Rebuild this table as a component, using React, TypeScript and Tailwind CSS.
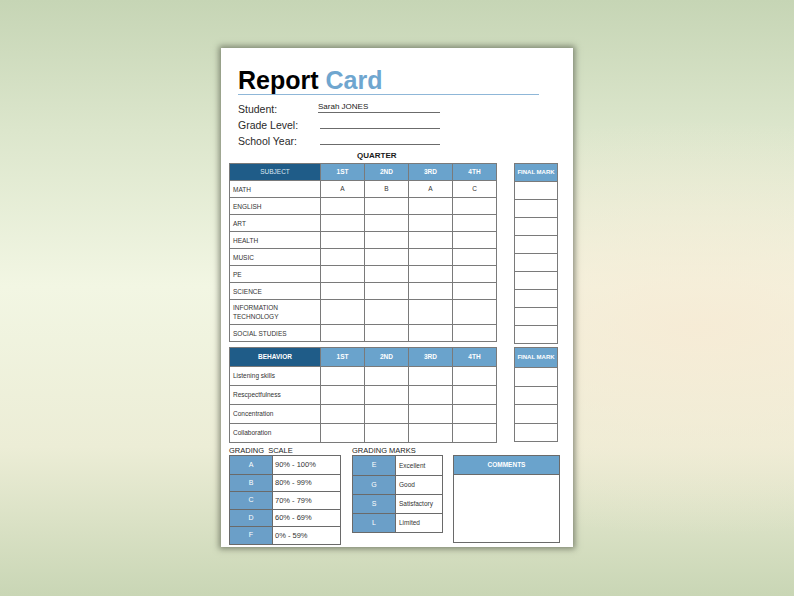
import React from 'react';

const subjects = ['MATH', 'ENGLISH', 'ART', 'HEALTH', 'MUSIC', 'PE', 'SCIENCE', 'INFORMATION TECHNOLOGY', 'SOCIAL STUDIES'];
const math = ['A', 'B', 'A', 'C'];
const behaviors = ['Listening skills', 'Rescpectfulness', 'Concentration', 'Collaboration'];
const scale = [
  ['A', '90% - 100%'],
  ['B', '80% - 99%'],
  ['C', '70% - 79%'],
  ['D', '60% - 69%'],
  ['F', '0% - 59%'],
];
const marks = [
  ['E', 'Excellent'],
  ['G', 'Good'],
  ['S', 'Satisfactory'],
  ['L', 'Limited'],
];
const quarters = ['1ST', '2ND', '3RD', '4TH'];

function InfoRow({ label, value, offset }: { label: string; value?: string; offset?: boolean }) {
  return (
    <div className="flex h-[16px] items-start">
      <div className="w-[80px] text-[10.5px] leading-[16px] text-[#2a2a2a]">{label}</div>
      <div className={`${offset ? 'ml-[2px] w-[120px]' : 'w-[122px]'} h-[12px] border-b border-[#6b6b6b] text-[8px] leading-[12px] text-[#222]`}>
        {value}
      </div>
    </div>
  );
}

function FinalCol({ rows, head, row }: { rows: number; head: string; row: string }) {
  return (
    <div className="ml-[17px] flex w-[44px] flex-col border border-[#7a7a7a]">
      <div className={`${head} flex items-center justify-center bg-[#6aa3cc] text-[6px] font-bold text-white`}>FINAL MARK</div>
      {Array.from({ length: rows }).map((_, i) => (
        <div key={i} className={`${row} border-t border-[#7a7a7a]`} />
      ))}
    </div>
  );
}

export default function App() {
  return (
    <div className="h-[596px] w-[794px] overflow-hidden bg-[radial-gradient(ellipse_at_88%_55%,rgba(247,234,212,0.85),transparent_45%),linear-gradient(180deg,#c6d5b5_0%,#dce6cc_22%,#f2f6e3_48%,#ecedd6_75%,#c9d6b5_100%)] pl-[221px] pt-[48px] font-['Liberation_Sans',Arial,sans-serif]">
      <div className="flex h-[499px] w-[352px] flex-col bg-white pl-[8px] shadow-[0_0_6px_2px_rgba(70,75,60,0.6)]">
        <div className="ml-[9px] mt-[20px]">
          <div className="text-[25px] font-bold leading-[25px] text-black">
            Report <span className="text-[#6fa6cf]">Card</span>
          </div>
          <div className="mt-[1px] h-px w-[301px] bg-[#8fb7d8]" />
          <div className="mt-[6px] flex flex-col">
            <InfoRow label="Student:" value="Sarah JONES" />
            <InfoRow label="Grade Level:" offset />
            <InfoRow label="School Year:" offset />
          </div>
        </div>

        <div className="ml-[128px] h-[14px] text-[8px] font-bold leading-[14px] text-[#1a1a1a]">QUARTER</div>

        <div className="flex items-start">
          <table className="w-[267px] table-fixed border-collapse text-[6.5px] text-[#333]">
            <colgroup>
              <col className="w-[91px]" />
              <col className="w-[44px]" />
              <col className="w-[44px]" />
              <col className="w-[44px]" />
              <col className="w-[44px]" />
            </colgroup>
            <tbody>
              <tr className="h-[17px]">
                <td className="border border-[#7a7a7a] bg-[#1f5c88] text-center text-[6.5px] text-[#dce8f2]">SUBJECT</td>
                {quarters.map((q) => (
                  <td key={q} className="border border-[#7a7a7a] bg-[#6aa3cc] text-center font-bold text-white">{q}</td>
                ))}
              </tr>
              {subjects.map((s, r) => (
                <tr key={s} className={s.startsWith('INFO') ? 'h-[25px]' : 'h-[17px]'}>
                  <td className="border border-[#7a7a7a] pl-[3px] leading-[9px]">
                    {s === 'INFORMATION TECHNOLOGY' ? (
                      <>INFORMATION<br />TECHNOLOGY</>
                    ) : (
                      s
                    )}
                  </td>
                  {quarters.map((q, i) => (
                    <td key={q} className="border border-[#7a7a7a] text-center">{r === 0 ? math[i] : ''}</td>
                  ))}
                </tr>
              ))}
            </tbody>
          </table>
          <FinalCol rows={9} head="h-[17px]" row="h-[18px]" />
        </div>

        <div className="mt-[3px] flex items-start">
          <table className="w-[267px] table-fixed border-collapse text-[6.5px] text-[#333]">
            <colgroup>
              <col className="w-[91px]" />
              <col className="w-[44px]" />
              <col className="w-[44px]" />
              <col className="w-[44px]" />
              <col className="w-[44px]" />
            </colgroup>
            <tbody>
              <tr className="h-[19px]">
                <td className="border border-[#7a7a7a] bg-[#1f5c88] text-center font-bold text-white">BEHAVIOR</td>
                {quarters.map((q) => (
                  <td key={q} className="border border-[#7a7a7a] bg-[#6aa3cc] text-center font-bold text-white">{q}</td>
                ))}
              </tr>
              {behaviors.map((b) => (
                <tr key={b} className="h-[19px]">
                  <td className="border border-[#7a7a7a] pl-[3px] text-[6.5px]">{b}</td>
                  {quarters.map((q) => (
                    <td key={q} className="border border-[#7a7a7a]" />
                  ))}
                </tr>
              ))}
            </tbody>
          </table>
          <FinalCol rows={4} head="h-[19px]" row="h-[18.5px]" />
        </div>

        <div className="flex items-start">
          <div className="flex w-[112px] flex-col">
            <div className="h-[12px] text-[7.5px] leading-[15px] text-[#222]">GRADING&nbsp; SCALE</div>
            <div className="flex flex-col border border-[#6a6a6a]">
              {scale.map(([l, v], i) => (
                <div key={l} className={`flex h-[17.5px] ${i ? 'border-t border-[#6a6a6a]' : ''}`}>
                  <div className="flex w-[42px] items-center justify-center bg-[#6b9fc8] text-[7px] text-white">{l}</div>
                  <div className="flex flex-1 items-center border-l border-[#6a6a6a] pl-[2px] text-[7.5px] text-[#333]">{v}</div>
                </div>
              ))}
            </div>
          </div>
          <div className="ml-[11px] flex w-[91px] flex-col">
            <div className="h-[12px] text-[7.5px] leading-[15px] text-[#222]">GRADING MARKS</div>
            <div className="flex flex-col border border-[#6a6a6a]">
              {marks.map(([l, v], i) => (
                <div key={l} className={`flex h-[19px] ${i ? 'border-t border-[#6a6a6a]' : ''}`}>
                  <div className="flex w-[42px] items-center justify-center bg-[#6b9fc8] text-[7px] text-white">{l}</div>
                  <div className="flex flex-1 items-center border-l border-[#6a6a6a] pl-[3px] text-[6.5px] text-[#333]">{v}</div>
                </div>
              ))}
            </div>
          </div>
          <div className="ml-[10px] mt-[12px] flex h-[88px] w-[107px] flex-col border border-[#6a6a6a]">
            <div className="flex h-[19px] items-center justify-center border-b border-[#6a6a6a] bg-[#6aa3cc] text-[6.5px] font-bold text-white">COMMENTS</div>
          </div>
        </div>
      </div>
    </div>
  );
}
